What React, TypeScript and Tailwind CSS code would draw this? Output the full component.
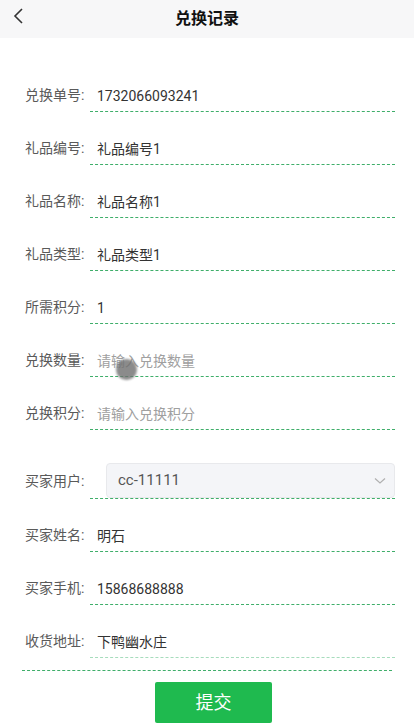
import React from "react";

type Row = { label: string; value?: string; placeholder?: string; light?: boolean };

const rowsTop: Row[] = [
  { label: "兑换单号:", value: "1732066093241" },
  { label: "礼品编号:", value: "礼品编号1" },
  { label: "礼品名称:", value: "礼品名称1" },
  { label: "礼品类型:", value: "礼品类型1" },
  { label: "所需积分:", value: "1" },
  { label: "兑换数量:", placeholder: "请输入兑换数量" },
  { label: "兑换积分:", placeholder: "请输入兑换积分" },
];

const rowsBottom: Row[] = [
  { label: "买家姓名:", value: "明石" },
  { label: "买家手机:", value: "15868688888" },
  { label: "收货地址:", value: "下鸭幽水庄", light: true },
];

function FieldRow({ r }: { r: Row }) {
  return (
    <div className="flex h-[53px] items-end pl-[25px] pr-[19px]">
      <div className="w-[65px] pb-[6px] text-[14px] leading-[22px] text-[#5a5a5a]">{r.label}</div>
      <div
        className={`flex h-[30px] flex-1 items-center border-b border-dashed pl-[7px] text-[14px] ${
          r.light ? "border-[#a6dcbc]" : "border-[#3fae6a]"
        }`}
      >
        {r.value ? (
          <span className="text-[#333]">{r.value}</span>
        ) : (
          <span className="text-[#a0a0a0]">{r.placeholder}</span>
        )}
      </div>
    </div>
  );
}

export default function App() {
  return (
    <div
      className="relative min-h-[727px] w-[414px] bg-white"
      style={{ fontFamily: "Roboto, 'Noto Sans CJK SC', sans-serif" }}
    >
      <header className="relative flex h-[38px] items-center justify-center bg-[#f7f7f8]">
        <svg
          className="absolute left-[12px] top-[7px]"
          width="12"
          height="18"
          viewBox="0 0 12 18"
          fill="none"
          stroke="#333"
          strokeWidth="1.6"
        >
          <path d="M10 2 L3 9 L10 16" />
        </svg>
        <h1 className="text-[16px] font-bold text-[#111]">兑换记录</h1>
      </header>

      <div className="pt-[21px]">
        {rowsTop.map((r) => (
          <FieldRow key={r.label} r={r} />
        ))}

        <div className="flex h-[69px] items-end pl-[25px] pr-[19px]">
          <div className="w-[65px] self-center pt-[32px] text-[14px] leading-[22px] text-[#5a5a5a]">
            买家用户:
          </div>
          <div className="flex-1 border-b border-dashed border-[#3fae6a] pl-[16px]">
            <div className="flex h-[35px] items-center justify-between rounded-[4px] border border-[#e8e9ec] bg-[#f4f5f8] pl-[11px] pr-[8px]">
              <span className="text-[15px] text-[#555]">cc-11111</span>
              <svg width="12" height="8" viewBox="0 0 12 8" fill="none" stroke="#b0b0b0" strokeWidth="1.2">
                <path d="M1 1.5 L6 6 L11 1.5" />
              </svg>
            </div>
          </div>
        </div>

        {rowsBottom.map((r) => (
          <FieldRow key={r.label} r={r} />
        ))}
      </div>

      <div className="mx-[22px] mt-[12px] border-b border-dashed border-[#3fae6a]" />

      <div className="flex pl-[155px] pt-[11px]">
        <button className="h-[41px] w-[117px] rounded-[2px] bg-[#1fba4f] text-[18px] text-white">提交</button>
      </div>

      <div className="pointer-events-none absolute left-[116px] top-[359px] h-[21px] w-[21px] rounded-full bg-[#6f6f6f] opacity-80 blur-[1px]" />
    </div>
  );
}
